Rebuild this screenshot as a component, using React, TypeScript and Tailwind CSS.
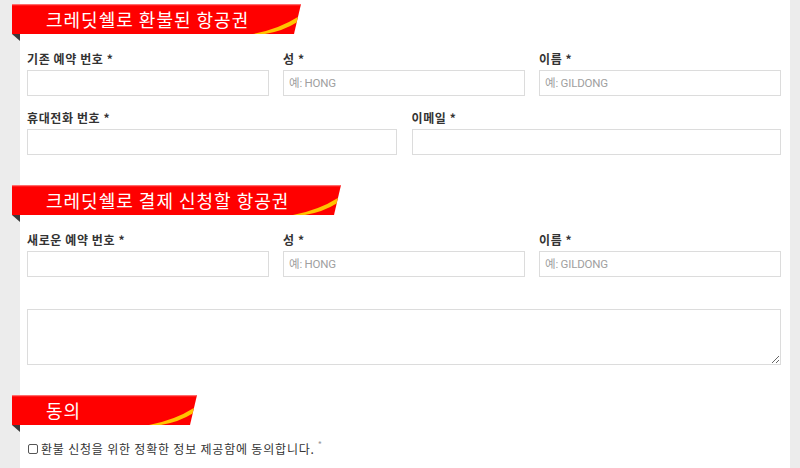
import React from "react";

const KR = { fontFamily: '"Noto Sans CJK KR", "Noto Sans", sans-serif' };
const PH = { fontFamily: 'Roboto, "Noto Sans CJK KR", sans-serif' };

function Banner({ width, title }: { width: number; title: string }) {
  const w = width;
  return (
    <div className="relative -ml-[15px] h-[30px]" style={{ width: w }}>
      <svg className="absolute left-0 top-0" width={w} height={37} viewBox={`0 0 ${w} 37`}>
        <polygon points={`0,0 ${w},0 ${w - 7},30 0,30`} fill="#ff0000" />
        <polygon points={`0,0 ${w},0 ${w - 0.3},1.2 0,1.2`} fill="#ff6b6b" />
        <path
          d={`M ${w - 48},30 Q ${w - 22},25 ${w - 3.2},13 L ${w - 4.4},18.5 Q ${w - 18},27 ${w - 36},30 Z`}
          fill="#ffc400"
        />
        <polygon points="0,30 8,30 8,37" fill="#3a3a3a" />
      </svg>
      <div
        className="relative flex h-[30px] items-center pl-[34px] text-[18px] leading-none tracking-[1px] text-white"
        style={KR}
      >
        {title}
      </div>
    </div>
  );
}

function Field({ label, placeholder }: { label: string; placeholder?: string }) {
  return (
    <div className="flex flex-col">
      <div className="h-[16px] text-[12px] font-bold leading-[16px] tracking-[0.6px] text-[#333]" style={KR}>
        {label}
      </div>
      <input
        className="mt-[3px] h-[26px] w-full border border-[#dcdcdc] bg-white px-[5px] text-[11.5px] tracking-[-0.2px] text-[#333] outline-none placeholder:text-[#a0a0a0]"
        style={PH}
        placeholder={placeholder}
      />
    </div>
  );
}

export default function App() {
  return (
    <div className="flex h-[468px] w-[800px] overflow-hidden bg-white">
      <div className="w-[20px] shrink-0 bg-[#ececec]" />
      <div className="flex-1 pl-[7px] pr-[9px] pt-[4px]">
        <Banner width={289} title="크레딧쉘로 환불된 항공권" />
        <div className="mt-[17px] grid grid-cols-3 gap-x-[14px]">
          <Field label="기존 예약 번호 *" />
          <Field label="성 *" placeholder="예: HONG" />
          <Field label="이름 *" placeholder="예: GILDONG" />
        </div>
        <div className="mt-[14px] grid grid-cols-2 gap-x-[15px]">
          <Field label="휴대전화 번호 *" />
          <Field label="이메일 *" />
        </div>

        <div className="mt-[30px]">
          <Banner width={329} title="크레딧쉘로 결제 신청할 항공권" />
        </div>
        <div className="mt-[17px] grid grid-cols-3 gap-x-[14px]">
          <Field label="새로운 예약 번호 *" />
          <Field label="성 *" placeholder="예: HONG" />
          <Field label="이름 *" placeholder="예: GILDONG" />
        </div>
        <textarea className="mt-[32px] block h-[56px] w-full border border-[#dcdcdc] bg-white outline-none" />

        <div className="mt-[30px]">
          <Banner width={185} title="동의" />
        </div>
        <div
          className="mt-[16px] flex h-[16px] items-center text-[12px] leading-[16px] tracking-[0.8px] text-[#333]"
          style={KR}
        >
          <span className="ml-[1px] mr-[3px] inline-block h-[10px] w-[10px] shrink-0 rounded-[2px] border border-[#555] bg-white" />
          <span>환불 신청을 위한 정확한 정보 제공함에 동의합니다.</span>
          <span className="ml-[3px] -translate-y-[4px] text-[9px] text-[#999]">*</span>
        </div>
      </div>
      <div className="w-[10px] shrink-0 bg-[#ececec]" />
    </div>
  );
}
